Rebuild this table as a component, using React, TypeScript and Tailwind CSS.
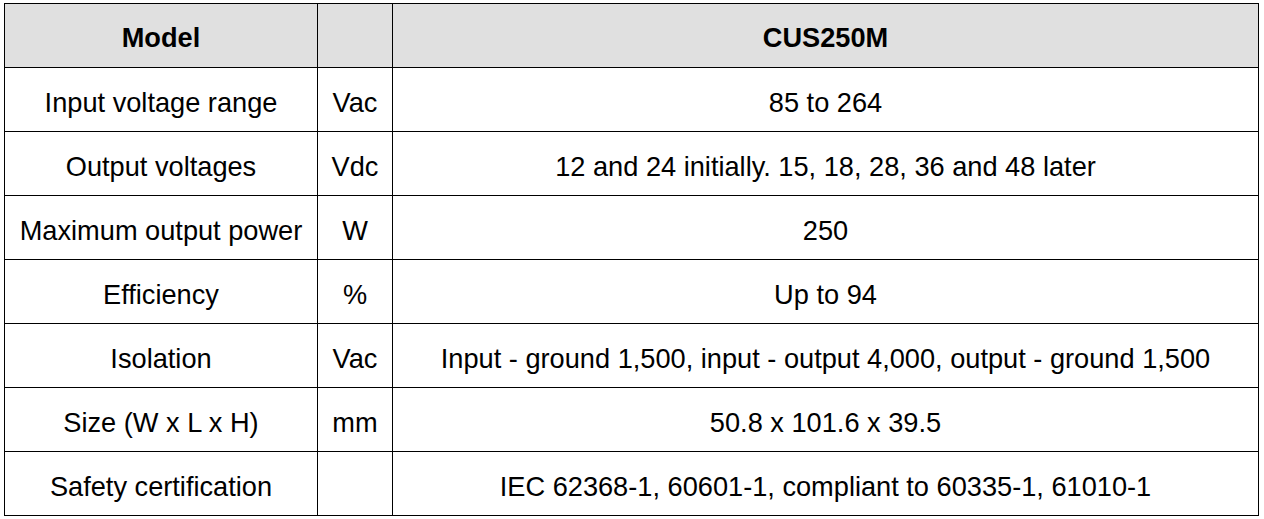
const rows = [
  ["Input voltage range", "Vac", "85 to 264"],
  ["Output voltages", "Vdc", "12 and 24 initially. 15, 18, 28, 36 and 48 later"],
  ["Maximum output power", "W", "250"],
  ["Efficiency", "%", "Up to 94"],
  ["Isolation", "Vac", "Input - ground 1,500, input - output 4,000, output - ground 1,500"],
  ["Size (W x L x H)", "mm", "50.8 x 101.6 x 39.5"],
  ["Safety certification", "", "IEC 62368-1, 60601-1, compliant to 60335-1, 61010-1"],
];

export default function App() {
  return (
    <div className="bg-white w-[1264px] h-[519px] pl-[4px] pt-[3px] font-['Liberation_Sans',Arial,sans-serif] text-black">
      <table className="border-collapse w-[1254px] table-fixed text-[27.2px] leading-none">
        <colgroup>
          <col className="w-[313px]" />
          <col className="w-[75px]" />
          <col className="w-[866px]" />
        </colgroup>
        <thead>
          <tr className="h-[64px] bg-[#e0e0e0]">
            <th className="border border-black text-center font-bold pt-[5px]">Model</th>
            <th className="border border-black"></th>
            <th className="border border-black text-center font-bold pt-[5px]">CUS250M</th>
          </tr>
        </thead>
        <tbody>
          {rows.map(([label, unit, value]) => (
            <tr key={label} className="h-[64px]">
              <td className="border border-black text-center pt-[6px]">{label}</td>
              <td className="border border-black text-center pt-[6px]">{unit}</td>
              <td className="border border-black text-center pt-[6px]">{value}</td>
            </tr>
          ))}
        </tbody>
      </table>
    </div>
  );
}
